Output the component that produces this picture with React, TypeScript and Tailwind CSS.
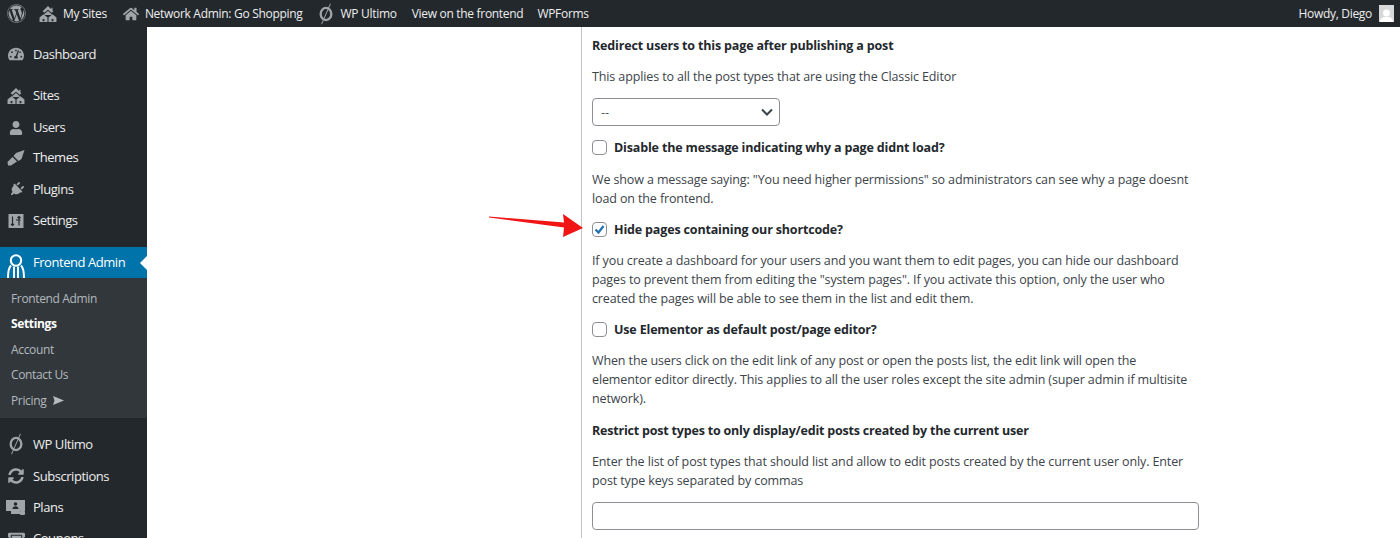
import React from "react";
import { FaWordpress, FaTachometerAlt, FaHome, FaUser, FaPlug, FaSyncAlt, FaTicketAlt } from "react-icons/fa";

const font = "font-['Open_Sans','Noto_Sans',sans-serif]";

function Houses({ size = 18 }: { size?: number }) {
  return (
    <svg width={size} height={size} viewBox="0 0 20 20" fill="currentColor">
      <path d="M10 1 13.600 4.600V3H15v3l1 1-2 1.600L10 5.400 6 8.600 4 7l6-6Z" />
      <path d="M10 6.600 14 10v1H6v-1l4-3.400Z" />
      <path d="M5 10.200 9.400 14v5H.6v-5L5 10.200Zm-1 5.300V18h2v-2.500H4Z" fillRule="evenodd" />
      <path d="M15 10.200 19.400 14v5h-8.800v-5l4.400-3.800Zm-1 5.300V18h2v-2.500h-2Z" fillRule="evenodd" />
    </svg>
  );
}

function Ultimo({ w = 16, h = 24 }: { w?: number; h?: number }) {
  return (
    <svg width={w} height={h} viewBox="0 0 18 24" fill="none" stroke="currentColor">
      <ellipse cx="9" cy="12" rx="6" ry="6.800" strokeWidth="2.600" />
      <path d="M14 0.500 4 23.500" strokeWidth="1.100" />
    </svg>
  );
}

function Brush() {
  return (
    <svg width="18" height="16" viewBox="0 0 18 16" fill="currentColor">
      <path d="M9 3 17.500 0 14.500 9 11.500 11 6.500 6Z" />
      <path d="M5.500 7 10 11.500 4 15.500 1 15.500 .5 12Z" />
    </svg>
  );
}

function Sliders() {
  return (
    <svg width="16" height="16" viewBox="0 0 16 16">
      <rect x="0.500" y="1" width="15" height="14" fill="currentColor" />
      <path d="M4.500 3.500v9M3 11l1.500 1.500L6 11M8 7h4.500M11 3.500v9M9.500 5 11 3.500 12.500 5" stroke="#23282d" strokeWidth="1.200" fill="none" />
    </svg>
  );
}

function Person() {
  return (
    <svg width="18" height="24" viewBox="0 0 18 24" fill="none" stroke="#fff" strokeWidth="2">
      <circle cx="9" cy="6.500" r="5.200" />
      <path d="M4 11.500C2 13.500 1 16 1 24M14 11.500C16 13.500 17 16 17 24M7 12.500V24M11 12.500V24" />
    </svg>
  );
}

function Plans() {
  return (
    <svg width="20" height="17" viewBox="0 0 20 17" fill="currentColor">
      <path d="M0 1h19v11h-5v3H5v-3H0V1Z" />
      <circle cx="9.500" cy="5" r="1.800" fill="#23282d" />
      <path d="M6.500 10c0-2 1.300-2.800 3-2.800s3 .8 3 2.800h-6Z" fill="#23282d" />
      <rect x="14" y="12" width="5" height="4" rx="1" />
    </svg>
  );
}

function BarLink({ icon, children, className }: { icon?: React.ReactNode; children: React.ReactNode; className?: string }) {
  return (
    <div className={`flex items-center whitespace-nowrap ${className ?? ""}`}>
      {icon}
      <span>{children}</span>
    </div>
  );
}

function MenuItem({ icon, label, className }: { icon: React.ReactNode; label: string; className: string }) {
  return (
    <div className={`flex items-center shrink-0 text-[13px] tracking-[-0.45px] leading-[19px] text-[#eeeeee] whitespace-nowrap ${className}`}>
      <span className="w-[33px] flex justify-center pr-[1px] text-[#a0a5aa] shrink-0">{icon}</span>
      {label}
    </div>
  );
}

function Check({ checked, label }: { checked?: boolean; label: string }) {
  return (
    <div className="flex items-center h-[19px]">
      <span className="w-[15px] h-[15px] rounded-[4px] border border-[#8c8f94] bg-white flex items-center justify-center mr-[7px] shrink-0">
        {checked && (
          <svg width="13" height="13" viewBox="0 0 13 13" fill="none" stroke="#2271b1" strokeWidth="2.200">
            <path d="M2.500 6.500 5.500 9.500 10.500 3" />
          </svg>
        )}
      </span>
      <span className="font-bold tracking-[-0.16px] text-[#23282d]">{label}</span>
    </div>
  );
}

export default function App() {
  return (
    <div className={`w-[1400px] h-[538px] overflow-hidden flex flex-col bg-white ${font}`}>
      <div className="h-[27px] shrink-0 bg-[#23282d] flex items-center text-[12px] tracking-[-0.3px] text-[#eeeeee] pl-[7px] pr-[6px]">
        <FaWordpress size={19} className="text-[#a0a5aa] mr-[13px]" />
        <BarLink className="mr-[16px]" icon={<span className="text-[#a0a5aa] mr-[6px]"><Houses size={18} /></span>}>My Sites</BarLink>
        <BarLink className="mr-[16px]" icon={<FaHome size={16} className="text-[#a0a5aa] mr-[6px]" />}>Network Admin: Go Shopping</BarLink>
        <BarLink className="mr-[15px]" icon={<span className="text-[#a0a5aa] mr-[6px]"><Ultimo w={16} h={24} /></span>}>WP Ultimo</BarLink>
        <BarLink className="mr-[14px]">View on the frontend</BarLink>
        <BarLink>WPForms</BarLink>
        <div className="ml-auto flex items-center gap-[7px]">
          <span>Howdy, Diego</span>
          <span className="w-[15px] h-[17px] bg-[#d8d8d8] flex items-end justify-center overflow-hidden">
            <svg width="13" height="14" viewBox="0 0 13 14" fill="#ffffff">
              <circle cx="6.500" cy="5" r="3.500" />
              <path d="M0 14c0-4 3-5 6.500-5s6.500 1 6.500 5H0Z" />
            </svg>
          </span>
        </div>
      </div>

      <div className="flex-1 flex min-h-0">
        <div className="w-[147px] shrink-0 bg-[#23282d] flex flex-col overflow-hidden">
          <MenuItem className="h-[54px]" icon={<FaTachometerAlt size={16} />} label="Dashboard" />
          <MenuItem className="h-[29px] mb-[3px]" icon={<Houses size={18} />} label="Sites" />
          <MenuItem className="h-[29px]" icon={<FaUser size={14} />} label="Users" />
          <MenuItem className="h-[31px]" icon={<Brush />} label="Themes" />
          <MenuItem className="h-[32px]" icon={<FaPlug size={15} className="rotate-45" />} label="Plugins" />
          <MenuItem className="h-[31px] mb-[11px]" icon={<Sliders />} label="Settings" />

          <div className="relative h-[31px] bg-[#0073aa] shrink-0 flex items-center text-[13px] tracking-[-0.45px] text-white">
            <span className="w-[33px] flex justify-center pt-[6px] pr-[1px]"><Person /></span>
            Frontend Admin
            <span className="absolute right-0 top-[9px] border-y-[7px] border-y-transparent border-r-[7px] border-r-white" />
          </div>

          <div className="bg-[#32373c] h-[140px] shrink-0 pt-[8px] pl-[11px] text-[12px] tracking-[-0.35px] text-[#b4b9be] flex flex-col">
            <div className="h-[25.500px] shrink-0 flex items-center">Frontend Admin</div>
            <div className="h-[25.500px] shrink-0 flex items-center font-bold text-white">Settings</div>
            <div className="h-[25.500px] shrink-0 flex items-center">Account</div>
            <div className="h-[25.500px] shrink-0 flex items-center">Contact Us</div>
            <div className="h-[25.500px] shrink-0 flex items-center gap-[7px]">
              Pricing
              <svg width="11" height="9" viewBox="0 0 11 9" fill="currentColor"><path d="M0 0 11 4.500 0 9l1.500-4.500L0 0Z" /></svg>
            </div>
          </div>

          <MenuItem className="h-[42px] pt-[10px]" icon={<Ultimo w={16} h={24} />} label="WP Ultimo" />
          <MenuItem className="h-[32px]" icon={<FaSyncAlt size={16} />} label="Subscriptions" />
          <MenuItem className="h-[31px]" icon={<Plans />} label="Plans" />
          <MenuItem className="h-[31px]" icon={<FaTicketAlt size={17} />} label="Coupons" />
        </div>

        <div className="relative flex-1 min-w-0">
          <div className="ml-[434px] w-[619px] h-full border-l border-[#c3c4c7] pl-[10px] pt-[9px] text-[12.500px] tracking-[-0.12px] leading-[19px] text-[#3c434a] flex flex-col gap-[12px] whitespace-nowrap">
            <p className="font-bold tracking-[-0.16px] text-[#23282d]">Redirect users to this page after publishing a post</p>
            <p>This applies to all the post types that are using the Classic Editor</p>
            <div className="w-[188px] h-[28px] shrink-0 rounded-[4px] border border-[#8c8f94] flex items-center justify-between pl-[8px] pr-[6px] text-[#50575e]">
              <span>--</span>
              <svg width="12" height="8" viewBox="0 0 12 8" fill="none" stroke="#3c434a" strokeWidth="2"><path d="M1 1.500 6 6.500 11 1.500" /></svg>
            </div>
            <Check label="Disable the message indicating why a page didnt load?" />
            <p className="mt-[1px]">We show a message saying: "You need higher permissions" so administrators can see why a page doesnt<br />load on the frontend.</p>
            <Check checked label="Hide pages containing our shortcode?" />
            <p>If you create a dashboard for your users and you want them to edit pages, you can hide our dashboard<br />pages to prevent them from editing the "system pages". If you activate this option, only the user who<br />created the pages will be able to see them in the list and edit them.</p>
            <Check label="Use Elementor as default post/page editor?" />
            <p>When the users click on the edit link of any post or open the posts list, the edit link will open the<br />elementor editor directly. This applies to all the user roles except the site admin (super admin if multisite<br />network).</p>
            <p className="font-bold tracking-[-0.2px] text-[#23282d] mt-[1px]">Restrict post types to only display/edit posts created by the current user</p>
            <p>Enter the list of post types that should list and allow to edit posts created by the current user only. Enter<br />post type keys separated by commas</p>
            <div className="w-[607px] h-[28px] shrink-0 rounded-[4px] border border-[#8c8f94] bg-white" />
          </div>

          <svg className="absolute left-[342px] top-[187px]" width="96" height="26" viewBox="0 0 96 26" fill="#f01414">
            <path d="M0 2.500 75 8.500 74 0 94 14 74 23 75 13.500 0 3.500Z" />
          </svg>
        </div>
      </div>
    </div>
  );
}
